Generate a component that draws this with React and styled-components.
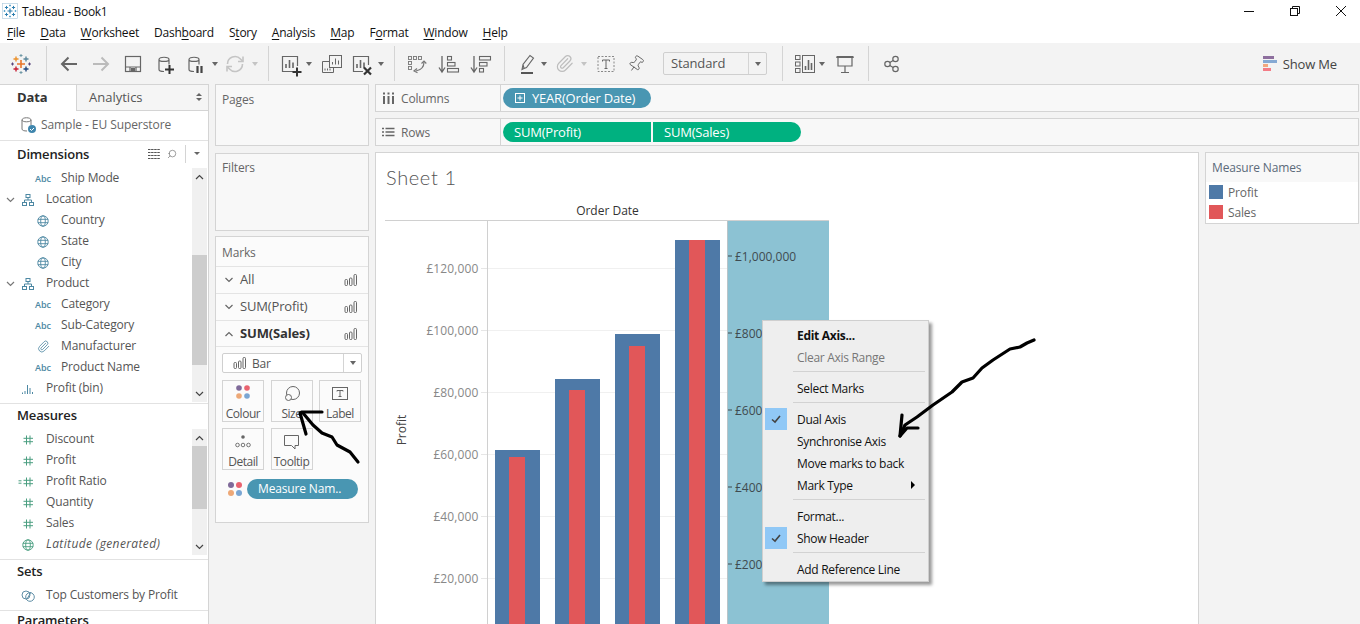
import React from 'react';
import styled, { createGlobalStyle } from 'styled-components';
import { Paperclip, Pin, Search } from 'lucide-react';

const UI = '"Open Sans", "Liberation Sans", sans-serif';
const GLOBAL_BORDER = '#d4d4d4';
const TEAL = '#4d88a3';
const GREEN = '#4a9e80';

const Global = createGlobalStyle`
  html, body { margin: 0; padding: 0; background: #f3f3f3; }
  * { box-sizing: border-box; }
`;

const Root = styled.div`
  position: relative; width: 1360px; height: 624px; overflow: hidden;
  background: #f3f3f3; font-family: ${UI}; font-size: 12px; color: #555;
  letter-spacing: -0.15px; display: flex; flex-direction: column;
`;
const TitleBar = styled.div`
  height: 22px; background: #fff; display: flex; align-items: center; padding-left: 2px; color: #111;
`;
const TitleText = styled.span` margin-left: 4px; font-size: 12px; letter-spacing: -0.3px; `;
const WinControls = styled.div` margin-left: auto; display: flex; margin-right: -4px; `;
const WinBtn = styled.div` width: 46px; height: 20px; display: flex; align-items: center; justify-content: center; `;
const MenuBar = styled.div`
  height: 21px; background: #fff; display: flex; align-items: center; padding-left: 7px; gap: 15px; color: #111; letter-spacing: -0.22px;
`;
const MenuEntry = styled.span` padding-bottom: 1px; u { text-underline-offset: 2px; } `;
const Toolbar = styled.div` height: 41px; display: flex; align-items: center; padding-left: 5px; flex-shrink: 0; `;
const Tool = styled.div`
  width: ${p => p.$w}px; height: 30px; flex-shrink: 0; display: flex; align-items: center; justify-content: center;
`;
const Caret = styled.span`
  display: block; width: 0; height: 0; border-left: 3px solid transparent; border-right: 3px solid transparent;
  border-top: 4px solid ${p => (p.$light ? '#c4c4c4' : '#666')};
`;
const ToolSep = styled.div`
  width: 1px; height: 35px; background: #d4d4d4; flex-shrink: 0;
  margin-left: ${p => p.$l}px; margin-right: ${p => p.$r}px;
`;
const Dropdown = styled.div`
  width: ${p => p.$w}px; height: ${p => p.$h}px; margin-left: ${p => p.$ml || 0}px; flex-shrink: 0;
  border: 1px solid #cfcfcf; border-radius: 2px; display: flex; align-items: center; color: #555;
  font-size: ${p => p.$fs || 12}px; background: ${p => p.$bg || 'transparent'};
`;
const DropLabel = styled.div` flex: 1; display: flex; align-items: center; padding: 0 0 ${p => p.$pb || 0}px ${p => p.$pad}px; gap: 5px; `;
const DropBtn = styled.div`
  width: ${p => p.$w}px; height: 100%; border-left: 1px solid #d4d4d4; display: flex; align-items: center; justify-content: center;
`;
const ShowMe = styled.div` margin-left: auto; margin-right: 23px; display: flex; align-items: center; gap: 6px; font-size: 13px; color: #444; `;

const Main = styled.div` flex: 1; display: flex; min-height: 0; `;
const DataPane = styled.div`
  width: 209px; flex-shrink: 0; background: #fff; border-right: 1px solid ${GLOBAL_BORDER}; border-top: 1px solid ${GLOBAL_BORDER};
  display: flex; flex-direction: column; overflow: hidden;
`;
const Tabs = styled.div` height: 26px; display: flex; flex-shrink: 0; `;
const DataTab = styled.div`
  width: 76px; padding: 0 0 2px 17px; display: flex; align-items: center; font-weight: 700; font-size: 13px; color: #333;
`;
const AnalyticsTab = styled.div`
  flex: 1; background: #f5f5f5; border-left: 1px solid ${GLOBAL_BORDER}; border-bottom: 1px solid ${GLOBAL_BORDER};
  display: flex; align-items: center; justify-content: space-between; padding: 0 6px 1px 12px; font-size: 13px; color: #555; letter-spacing: 0;
`;
const UpDown = styled.span`
  display: flex; flex-direction: column; gap: 2px;
`;
const Tri = styled.span`
  display: block; width: 0; height: 0; border-left: 3px solid transparent; border-right: 3px solid transparent;
  ${p => (p.$up ? 'border-bottom: 3px solid #666;' : 'border-top: 3px solid #666;')}
`;
const SourceRow = styled.div`
  height: 30px; flex-shrink: 0; border-bottom: 1px solid #e2e2e2; display: flex; align-items: center; padding: 0 0 2px 20px; gap: 4px; color: #666; letter-spacing: -0.08px;
`;
const SectionHead = styled.div`
  height: ${p => p.$h}px; flex-shrink: 0; display: flex; align-items: center; padding: 0 0 ${p => p.$pb || 0}px 17px;
  font-weight: 600; font-size: 13px; color: #222;
`;
const HeadTools = styled.div` margin-left: auto; display: flex; align-items: center; gap: 7px; padding-right: 8px; `;
const HeadSep = styled.div` width: 1px; height: 18px; background: #d4d4d4; margin: 0 1px; `;
const ListWrap = styled.div` display: flex; height: ${p => p.$h}px; flex-shrink: 0; `;
const List = styled.div` flex: 1; min-width: 0; `;
const Row = styled.div`
  height: 21px; flex-shrink: 0; display: flex; align-items: center; padding-left: ${p => (p.$nested ? 15 : 0)}px; white-space: nowrap;
  color: #555; margin-top: ${p => p.$mt || 0}px;
`;
const Chev = styled.span` width: 20px; flex-shrink: 0; display: flex; justify-content: center; `;
const RowIcon = styled.span` width: 16px; height: 16px; flex-shrink: 0; display: flex; align-items: center; justify-content: center; `;
const Abc = styled.span` font-size: 9px; font-weight: 600; color: ${TEAL}; letter-spacing: 0; `;
const RowName = styled.span`
  margin-left: 10px; padding-bottom: 2px;
  font-style: ${p => (p.$italic ? 'italic' : 'normal')};
  letter-spacing: ${p => (p.$italic ? '0.38px' : p.$wide ? '0' : '-0.15px')};
`;
const Scroll = styled.div`
  width: 15px; margin-right: 1px; flex-shrink: 0; background: #f0f0f0; display: flex; flex-direction: column; height: ${p => p.$h}px;
`;
const ScrollArrow = styled.div` height: 17px; flex-shrink: 0; display: flex; align-items: center; justify-content: center; margin-top: ${p => (p.$end ? 'auto' : 0)}; `;
const Thumb = styled.div` background: #cdcdcd; flex-shrink: 0; height: ${p => p.$h}px; margin-top: ${p => p.$t}px; `;
const Divider = styled.div` height: 1px; background: #e2e2e2; flex-shrink: 0; margin-top: ${p => p.$mt || 0}px; `;

const CardsCol = styled.div` width: 154px; flex-shrink: 0; margin: 0 6px; display: flex; flex-direction: column; `;
const Card = styled.div`
  height: ${p => p.$h}px; margin-bottom: ${p => p.$mb || 0}px; flex-shrink: 0; border: 1px solid ${GLOBAL_BORDER}; background: #f8f8f8; padding: ${p => p.$pt}px 6px 0; color: #666;
`;
const MarksCard = styled.div` height: 287px; border: 1px solid ${GLOBAL_BORDER}; background: #fbfbfb; flex-shrink: 0; `;
const MarksTitle = styled.div` height: 30px; padding: 7px 6px 0; color: #666; border-bottom: 1px solid #e4e4e4; `;
const MarkRow = styled.div`
  height: ${p => p.$h || 27}px; border-bottom: 1px solid #e4e4e4; display: flex; align-items: center; padding: 0 10px 0 8px; font-size: 13px;
  font-weight: ${p => (p.$bold ? 700 : 400)}; color: ${p => (p.$bold ? '#333' : '#555')};
`;
const MarkName = styled.span` margin-left: 6px; flex: 1; padding-bottom: 2px; `;
const MarksBody = styled.div` padding: 6px 6px 0; `;
const CellGrid = styled.div` display: grid; grid-template-columns: repeat(3, 42px); column-gap: 6.5px; row-gap: 6px; margin-top: 7px; `;
const Cell = styled.div`
  height: 42px; border: 1px solid ${GLOBAL_BORDER}; display: flex; flex-direction: column; align-items: center; justify-content: space-between; padding: 3px 0 0; color: #555; letter-spacing: -0.45px; line-height: 15px;
`;
const PillRow = styled.div` display: flex; align-items: center; margin-top: 9px; padding-left: 5px; gap: 4px; `;
const Pill = styled.div`
  height: 20px; width: ${p => p.$w}px; flex-shrink: 0; background: ${p => p.$bg}; color: #fff; display: flex; align-items: center;
  padding: 0 0 1px ${p => p.$pad}px; gap: 7px; white-space: nowrap; margin-right: ${p => p.$mr || 0}px;
  font-size: ${p => p.$fs || 13}px; letter-spacing: ${p => (p.$fs ? '-0.15px' : '-0.2px')};
  border-radius: ${p => p.$radius || '10px'};
`;

const RightCol = styled.div` flex: 1; min-width: 0; margin-right: 1px; display: flex; flex-direction: column; `;
const Shelf = styled.div`
  height: 28px; flex-shrink: 0; margin-bottom: 6px; border: 1px solid ${GLOBAL_BORDER}; background: #f8f8f8; display: flex;
`;
const ShelfLabel = styled.div`
  width: 125px; flex-shrink: 0; border-right: 1px solid ${GLOBAL_BORDER}; display: flex; align-items: center; padding-left: 6px; gap: 7px; color: #666;
`;
const ShelfPills = styled.div` display: flex; align-items: center; padding-left: 2px; `;
const Stage = styled.div` flex: 1; min-height: 0; display: flex; gap: 6px; `;
const Sheet = styled.div`
  width: 824px; flex-shrink: 0; background: #fff; border: 1px solid ${GLOBAL_BORDER}; border-bottom: 0; padding-left: 9px; overflow: hidden;
`;
const SheetTitle = styled.div`
  height: 50px; display: flex; align-items: center; padding: 0 0 2px 1px; font-family: Lato, sans-serif; font-weight: 300; font-size: 20px; color: #555; letter-spacing: .65px;
`;
const HeaderRow = styled.div`
  width: 444px; height: 18px; padding-left: 103px; border-bottom: 1px solid #d0d0d0;
`;
const HeaderText = styled.div` width: 239px; text-align: center; font-size: 12px; font-weight: 400; color: #333; line-height: 16px; letter-spacing: 0; `;
const Chart = styled.div` display: flex; height: 403px; `;
const AxisLeft = styled.div` width: 102px; flex-shrink: 0; position: relative; `;
const AxisTitle = styled.div`
  position: absolute; left: 16px; top: 208.500px; transform: translate(-50%, -50%) rotate(-90deg); font-size: 12px; font-weight: 500; color: #444; letter-spacing: 0;
`;
const AxisTick = styled.div`
  position: absolute; right: 8.500px; top: ${p => p.$y}px; transform: translateY(-50%); color: #888; letter-spacing: 0.12px;
`;
const AxisMark = styled.div`
  position: absolute; right: 0; top: ${p => p.$y}px; width: 6px; height: 1px; background: #e6e6e6;
`;
const Plot = styled.div`
  width: 240px; flex-shrink: 0; border-left: 1px solid #d0d0d0; position: relative; display: flex; align-items: flex-end; gap: 15px; padding-left: 7px;
`;
const GridLine = styled.div` position: absolute; left: 0; right: 0; top: ${p => p.$y}px; height: 1px; background: #f0f0f0; `;
const Bar = styled.div`
  position: relative; width: 45px; flex-shrink: 0; background: #4e79a7; display: flex; justify-content: center; align-items: flex-end;
`;
const RedBar = styled.div` width: 16px; margin-right: 1px; background: #e15759; `;
const AxisRight = styled.div`
  width: 102px; flex-shrink: 0; background: #8cc2d3; border-left: 1px solid #b9c4c8; position: relative;
`;
const RTick = styled.div`
  position: absolute; left: 0; top: ${p => p.$y}px; display: flex; align-items: center; gap: 3px; transform: translateY(-50%); color: #3f4b50; letter-spacing: 0;
`;
const RMark = styled.span` width: 4px; height: 1px; background: #3f4b50; `;
const Legend = styled.div`
  width: 154px; height: 72px; flex-shrink: 0; border: 1px solid ${GLOBAL_BORDER}; background: #fff;
`;
const LegendHead = styled.div` height: 29px; background: #f8f8f8; display: flex; align-items: center; padding: 0 0 1px 6px; color: #5b6a7a; `;
const LegendRow = styled.div` height: 20px; display: flex; align-items: center; padding-left: 3px; gap: 5px; color: #666; `;
const Swatch = styled.span` width: 14px; height: 14px; background: ${p => p.$c}; `;

const CtxMenu = styled.div`
  position: absolute; left: 762px; top: 320px; width: 167px; height: 262px; padding: 3px 0 0; background: #eeeeee; border: 1px solid #cfcfcf;
  box-shadow: 3px 3px 3px rgba(0,0,0,.4); color: #111; z-index: 5; letter-spacing: -0.3px;
`;
const CtxItem = styled.div`
  height: 22px; display: flex; align-items: center; padding-left: ${p => (p.$checked ? 2 : 34)}px;
  font-weight: ${p => (p.$bold ? 700 : 400)}; color: ${p => (p.$off ? '#777' : '#111')};
`;
const CheckBox = styled.span`
  width: 22px; height: 22px; margin-right: 10px; background: #90c8f6; display: flex; align-items: center; justify-content: center;
`;
const SubArrow = styled.span`
  margin-left: auto; margin-right: 13px; width: 0; height: 0; border-top: 4px solid transparent; border-bottom: 4px solid transparent; border-left: 4px solid #000;
`;
const CtxSep = styled.div`
  height: 9px; padding-top: 3px; margin: 0 3px 0 30px;
  &::before { content: ''; display: block; height: 1px; background: #d2d2d2; }
`;
const Sketch = styled.svg` position: absolute; left: 0; top: 0; z-index: 6; pointer-events: none; `;

const S = styled.svg` display: block; flex-shrink: 0; overflow: visible; `;
const Ic = ({ s = 24, c = '#666', w = 1.2, children }) => (
  <S width={s} height={s} viewBox={`0 0 ${s} ${s}`} fill="none" stroke={c} strokeWidth={w}>{children}</S>
);

const Plus = ({ x, y, r, c, w = 1.4 }) => (
  <path d={`M${x - r} ${y}H${x + r}M${x} ${y - r}V${y + r}`} stroke={c} strokeWidth={w} />
);
const Logo = () => (
  <Ic s={24}>
    <Plus x={12} y={12} r={4} c="#e8762c" w={1.6} />
    <Plus x={7} y={7} r={2.5} c="#eb912b" /><Plus x={17} y={7} r={2.5} c="#5b879b" />
    <Plus x={7} y={17} r={2.5} c="#c72035" /><Plus x={17} y={17} r={2.5} c="#1f457e" />
    <Plus x={12} y={3.5} r={1.5} c="#7099a6" w={1} /><Plus x={12} y={20.5} r={1.5} c="#7099a6" w={1} />
    <Plus x={3.5} y={12} r={1.5} c="#59457c" w={1} /><Plus x={20.5} y={12} r={1.5} c="#59457c" w={1} />
  </Ic>
);
const TitleIcon = () => (
  <Ic s={16}>
    <rect x=".5" y=".5" width="15" height="15" stroke="#a9c9dc" strokeWidth=".6" />
    <Plus x={8} y={8} r={2.5} c="#2d7fb0" w={1.2} />
    <Plus x={4.5} y={4.5} r={1.6} c="#2d7fb0" w={1} /><Plus x={11.5} y={4.5} r={1.6} c="#2d7fb0" w={1} />
    <Plus x={4.5} y={11.5} r={1.6} c="#2d7fb0" w={1} /><Plus x={11.5} y={11.5} r={1.6} c="#2d7fb0" w={1} />
    <Plus x={8} y={2.5} r={1} c="#4d9cc8" w={.8} /><Plus x={8} y={13.5} r={1} c="#4d9cc8" w={.8} />
    <Plus x={2.5} y={8} r={1} c="#4d9cc8" w={.8} /><Plus x={13.5} y={8} r={1} c="#4d9cc8" w={.8} />
  </Ic>
);
const ArrowH = ({ dir, c }) => (
  <Ic c={c} w={2}>
    {dir === 'l'
      ? <path d="M20 12H5M11.5 5.5L5 12l6.5 6.5" />
      : <path d="M4 12h15M12.5 5.5L19 12l-6.5 6.5" />}
  </Ic>
);
const SaveIc = () => (
  <Ic>
    <rect x="4.5" y="4.5" width="15" height="15" />
    <path d="M4.5 15h15M9 15v4.5h6V15" />
    <rect x="10" y="16" width="4" height="3.5" fill="#666" stroke="none" />
  </Ic>
);
const Cyl = () => (
  <>
    <path d="M6 7.5c0-3 10-3 10 0v5M6 7.5c0 2.6 10 2.6 10 0M6 7.5v10c0 1.4 2.5 2 5 2" />
  </>
);
const DsAdd = () => (
  <Ic><Cyl /><path d="M12 17.5h9M16.500 13v9" stroke="#333" strokeWidth="2" /></Ic>
);
const DsPause = () => (
  <Ic><Cyl /><path d="M14.500 14v7M18.500 14v7" stroke="#444" strokeWidth="2.200" /></Ic>
);
const RefreshIc = () => (
  <Ic c="#c4c4c4" w={1.6}>
    <path d="M4.500 12a7.500 7.500 0 0 1 13-5l2 2M19.500 12a7.500 7.500 0 0 1-13 5l-2-2" />
    <path d="M20 4.500V9.500h-5M4 19.500V14.500h5" />
  </Ic>
);
const Bars = ({ x, y, c = '#666' }) => (
  <path d={`M${x} ${y}v-4M${x + 3.5} ${y}v-8M${x + 7} ${y}v-5.500`} stroke={c} strokeWidth="1.600" />
);
const NewSheet = () => (
  <Ic>
    <path d="M15 19.500H4.500v-15h15V14" /><Bars x={8} y={16} />
    <path d="M14.500 20h9M19 15.500v9" stroke="#333" strokeWidth="2" />
  </Ic>
);
const DupSheet = () => (
  <Ic w={1}>
    <rect x="10.500" y="3.500" width="12" height="12" fill="#f3f3f3" />
    <path d="M13.500 12.500v-2.500M16.500 12.500v-6M19.500 12.500v-4" />
    <path d="M10 9.500H3.500V20.500H14.500V15.500" />
    <path d="M6 18.500v-2M8.500 18.500v-2M11 18.500v-2" />
  </Ic>
);
const ClearSheet = () => (
  <Ic>
    <path d="M14 19.500H4.500v-15h15V13" /><Bars x={8} y={16} />
    <path d="M15 15.500l7 7M22 15.500l-7 7" stroke="#333" strokeWidth="2.200" />
  </Ic>
);
const SwapIc = () => (
  <Ic w={.9} c="#777">
    <rect x="4.500" y="4.500" width="3" height="3" /><rect x="9.500" y="4.500" width="3" height="3" /><rect x="14.500" y="4.500" width="3" height="3" />
    <rect x="4.500" y="9.500" width="3" height="3" /><rect x="4.500" y="14.500" width="3" height="3" />
    <path d="M20 10c0 5-3 8-8 9" strokeWidth="1.200" /><path d="M17.500 11.500l2.500-2.500 2.300 2.500M13 16.500l-3 2.500 3.500 1.800" strokeWidth="1.200" />
  </Ic>
);
const SortIc = ({ desc }) => (
  <Ic w={1.1}>
    <path d="M5 4v15M2 15.500l3 4.500 3-4.500" strokeWidth="1.300" />
    {desc
      ? <><rect x="10.500" y="4.500" width="11" height="3.500" /><rect x="10.500" y="10.500" width="7.500" height="3.500" /><rect x="10.500" y="16.500" width="4" height="3.500" /></>
      : <><rect x="10.500" y="4.500" width="4" height="3.500" /><rect x="10.500" y="10.500" width="7.500" height="3.500" /><rect x="10.500" y="16.500" width="11" height="3.500" /></>}
  </Ic>
);
const Highlighter = () => (
  <Ic w={1.100}>
    <path d="M9 16.500l-1-4L15 3.500l3.500 2.500-7 9.500zM8 12.500L7 17.500l2-1" />
    <path d="M6 21h12" stroke="#555" strokeWidth="2" />
  </Ic>
);
const TBox = () => (
  <Ic c="#888" w={1}>
    <rect x="4" y="4.500" width="16" height="15" strokeDasharray="2 1.500" />
    <path d="M8.500 9.500v-1.500h7v1.500M12 8v8.500M10.500 16.500h3" stroke="#666" />
  </Ic>
);
const ShowMeSheets = () => (
  <Ic w={1}>
    <rect x="2.500" y="3.500" width="4.500" height="4" /><rect x="2.500" y="10" width="4.500" height="4" /><rect x="2.500" y="16.500" width="4.500" height="4" />
    <rect x="9.500" y="3.500" width="12" height="17" />
    <path d="M12.500 18v-4M15.500 18v-10M18.500 18v-7" strokeWidth="1.600" />
  </Ic>
);
const Present = () => (
  <Ic w={1.200}>
    <path d="M3.500 5.500h17M5 5.500v8.500h14V5.500M12 14v6M8 20.500h8" />
    <path d="M3.500 5h17" strokeWidth="2" />
  </Ic>
);
const ShareIc = () => (
  <Ic w={1.200}>
    <circle cx="7.500" cy="12" r="2.700" /><circle cx="15.500" cy="7" r="2.700" /><circle cx="15.500" cy="17" r="2.700" />
    <path d="M9.800 10.500l3.400-2M9.800 13.500l3.400 2" />
  </Ic>
);
const ShowMeIc = () => (
  <S width="14" height="16" viewBox="0 0 14 16">
    <rect x="0" y="0" width="11" height="3" fill="#8e6f9e" />
    <rect x="0" y="4" width="14" height="3" fill="#86a9d3" />
    <rect x="0" y="8" width="5" height="3" fill="#f2a77e" />
    <rect x="0" y="12" width="8" height="3" fill="#f47c86" />
  </S>
);
const SourceIc = () => (
  <S width="17" height="18" viewBox="0 0 17 18" fill="none" stroke="#777" strokeWidth="1">
    <path d="M2 4c0-3 9-3 9 0v5M2 4c0 2.400 9 2.400 9 0M2 4v9c0 1.400 2 2 5 2" />
    <circle cx="12" cy="13" r="4" fill="#3f86ad" stroke="none" />
    <path d="M10 13l1.500 1.500 2.500-2.500" stroke="#fff" />
  </S>
);
const GridIc = () => (
  <Ic s={12} w={1} c="#555">
    <path d="M0 1.500h12M0 4.500h12M0 7.500h12M0 10.500h12" strokeDasharray="2.500 .6" />
  </Ic>
);
const ChevIc = ({ up, c = '#666', w = 9 }) => (
  <S width={w} height="6" viewBox="0 0 9 6" fill="none" stroke={c} strokeWidth="1.200">
    <path d={up ? 'M1 5l3.500-3.500L8 5' : 'M1 1l3.500 3.500L8 1'} />
  </S>
);
const Globe = ({ c = TEAL }) => (
  <Ic s={12} c={c} w={.9}>
    <circle cx="6" cy="6" r="5.200" /><ellipse cx="6" cy="6" rx="2.300" ry="5.200" />
    <path d="M.8 4.300h10.400M.8 7.700h10.400" />
  </Ic>
);
const Hier = () => (
  <Ic s={12} c={TEAL} w={1}>
    <rect x="4" y=".5" width="4" height="3" /><rect x=".5" y="8.500" width="4" height="3" /><rect x="7.500" y="8.500" width="4" height="3" />
    <path d="M6 3.500V6M2.500 8.500V6h7v2.500" />
  </Ic>
);
const Hash = ({ ratio }) => (
  <S width="16" height="12" viewBox="0 0 16 12" fill="none" stroke={GREEN} strokeWidth="1">
    <path d="M6.500 1.500V10.500M10 1.500V10.500M3.500 4.300h9.500M3.500 7.700h9.500" />
    {ratio && <path d="M-1.500 4.800h3M-1.500 7.200h3" />}
  </S>
);
const BinIc = () => (
  <Ic s={14} c={TEAL} w={1}>
    <path d="M1.500 12v-1.500M4 12v-3M6.500 12V3M9 12V6M11.500 12v-2" />
  </Ic>
);
const SetIc = () => (
  <Ic s={14} c="#5f8ea6" w={1}>
    <circle cx="5" cy="6" r="4" /><circle cx="9" cy="8" r="4.300" />
    <path d="M6 10l4-7" />
  </Ic>
);
const ClipIc = ({ c = TEAL, s = 13 }) => <Paperclip size={s} color={c} strokeWidth={1.5} />;
const BarMark = ({ c = '#666' }) => (
  <Ic s={14} c={c} w={1}>
    <rect x="1" y="6.500" width="2.500" height="6" rx="1" /><rect x="5.500" y="5" width="2.500" height="7.500" rx="1" /><rect x="10" y="1.500" width="2.500" height="11" rx="1" />
  </Ic>
);
const DotGrid = ({ s = 16, r = 2.800 }) => (
  <S width={s} height={s} viewBox="0 0 16 16">
    <circle cx="4" cy="4" r={r} fill="#7f6a99" /><circle cx="12" cy="4" r={r} fill="#e9636f" />
    <circle cx="4" cy="12" r={r} fill="#eda877" /><circle cx="12" cy="12" r={r} fill="#7aa6d3" />
  </S>
);
const SizeIc = () => (
  <Ic s={20} w={1} c="#666">
    <circle cx="11" cy="9" r="6.500" /><circle cx="6.500" cy="13.500" r="3" fill="#fbfbfb" />
  </Ic>
);
const LabelIc = () => (
  <Ic s={20} w={1} c="#666">
    <rect x="2.500" y="3.500" width="15" height="12" />
    <path d="M7 7.500v-1h6v1M10 6.500v6M8.500 12.500h3" />
  </Ic>
);
const DetailIc = () => (
  <Ic s={20} w={.9} c="#666">
    <circle cx="10" cy="5" r="1.800" fill="#666" stroke="none" />
    <circle cx="4.500" cy="13" r="1.800" /><circle cx="10" cy="13" r="1.800" /><circle cx="15.500" cy="13" r="1.800" />
  </Ic>
);
const TooltipIc = () => (
  <Ic s={20} w={1} c="#666">
    <path d="M2.500 3.500h14v10h-3.500v3.500l-3.500-3.500h-7z" />
  </Ic>
);

const dims = [
  { n: 'Ship Mode', i: 'abc', nested: true },
  { n: 'Location', i: 'hier', chev: true },
  { n: 'Country', i: 'globe', nested: true },
  { n: 'State', i: 'globe', nested: true },
  { n: 'City', i: 'globe', nested: true },
  { n: 'Product', i: 'hier', chev: true },
  { n: 'Category', i: 'abc', nested: true },
  { n: 'Sub-Category', i: 'abc', nested: true },
  { n: 'Manufacturer', i: 'clip', nested: true },
  { n: 'Product Name', i: 'abc', nested: true },
  { n: 'Profit (bin)', i: 'bin' },
];
const measures = [
  { n: 'Discount', i: 'hash' }, { n: 'Profit', i: 'hash' }, { n: 'Profit Ratio', i: 'ratio' },
  { n: 'Quantity', i: 'hash' }, { n: 'Sales', i: 'hash' }, { n: 'Latitude (generated)', i: 'ggreen', italic: true },
];
const rowIcon = i => ({
  abc: <Abc>Abc</Abc>, hier: <Hier />, globe: <Globe />, clip: <ClipIc />, bin: <BinIc />,
  hash: <Hash />, ratio: <Hash ratio />, ggreen: <Globe c={GREEN} />,
}[i]);

const TreeRow = ({ r }) => (
  <Row $nested={r.nested}>
    <Chev>{r.chev && <ChevIc c="#777" />}</Chev>
    <RowIcon>{rowIcon(r.i)}</RowIcon>
    <RowName $italic={r.italic}>{r.n}</RowName>
  </Row>
);
const ScrollBar = ({ h, t, th }) => (
  <Scroll $h={h}>
    <ScrollArrow><ChevIc up c="#444" /></ScrollArrow>
    <Thumb $t={t} $h={th} />
    <ScrollArrow $end><ChevIc c="#444" /></ScrollArrow>
  </Scroll>
);

const menuItems = ['File', 'Data', 'Worksheet', 'Dashboard', 'Story', 'Analysis', 'Map', 'Format', 'Window', 'Help'];
const accel = { File: 0, Data: 0, Worksheet: 0, Dashboard: 4, Story: 1, Analysis: 0, Map: 0, Format: 1, Window: 0, Help: 0 };
const leftTicks = [['£120,000', 47], ['£100,000', 109], ['£80,000', 171], ['£60,000', 233], ['£40,000', 295], ['£20,000', 357]];
const rightTicks = [['£1,000,000', 35], ['£800,000', 112], ['£600,000', 189], ['£400,000', 266], ['£200,000', 343]];
const bars = [[174, 167], [245, 234], [290, 278], [384, 384]];

export default function App() {
  return (
    <Root>
      <Global />
      <TitleBar>
        <TitleIcon />
        <TitleText>Tableau - Book1</TitleText>
        <WinControls>
          <WinBtn><Ic s={12} c="#111" w={1}><path d="M1 6.500h10" /></Ic></WinBtn>
          <WinBtn><Ic s={12} c="#111" w={1}><rect x="1.500" y="3.500" width="7" height="7" /><path d="M3.500 3.500v-2h7v7h-2" /></Ic></WinBtn>
          <WinBtn><Ic s={12} c="#111" w={1}><path d="M1 1l10 10M11 1L1 11" /></Ic></WinBtn>
        </WinControls>
      </TitleBar>
      <MenuBar>
        {menuItems.map(m => {
          const k = accel[m];
          return <MenuEntry key={m}>{m.slice(0, k)}<u>{m[k]}</u>{m.slice(k + 1)}</MenuEntry>;
        })}
      </MenuBar>
      <Toolbar>
        <Tool $w={32}><Logo /></Tool>
        <ToolSep $l={9} $r={8} />
        <Tool $w={28}><ArrowH dir="l" c="#666" /></Tool>
        <Tool $w={36}><ArrowH dir="r" c="#bbb" /></Tool>
        <Tool $w={28}><SaveIc /></Tool>
        <Tool $w={36}><DsAdd /></Tool>
        <Tool $w={24}><DsPause /></Tool>
        <Tool $w={16}><Caret /></Tool>
        <Tool $w={24}><RefreshIc /></Tool>
        <Tool $w={16}><Caret $light /></Tool>
        <ToolSep $l={5} $r={9} />
        <Tool $w={24}><NewSheet /></Tool>
        <Tool $w={14}><Caret /></Tool>
        <Tool $w={30}><DupSheet /></Tool>
        <Tool $w={30}><ClearSheet /></Tool>
        <Tool $w={10}><Caret /></Tool>
        <ToolSep $l={8} $r={7} />
        <Tool $w={28}><SwapIc /></Tool>
        <Tool $w={38}><SortIc /></Tool>
        <Tool $w={26}><SortIc desc /></Tool>
        <ToolSep $l={10} $r={9} />
        <Tool $w={26}><Highlighter /></Tool>
        <Tool $w={8}><Caret /></Tool>
        <Tool $w={32}><ClipIc c="#bdbdbd" s={19} /></Tool>
        <Tool $w={8}><Caret $light /></Tool>
        <Tool $w={36}><TBox /></Tool>
        <Tool $w={24}><Pin size={18} color="#666" strokeWidth={1.2} style={{ transform: 'rotate(35deg)' }} /></Tool>
        <Dropdown $w={104} $h={23} $ml={15} $fs={13}>
          <DropLabel $pad={7} $pb={1}>Standard</DropLabel>
          <DropBtn $w={18}><Caret /></DropBtn>
        </Dropdown>
        <ToolSep $l={15} $r={12} />
        <Tool $w={20}><ShowMeSheets /></Tool>
        <Tool $w={14}><Caret /></Tool>
        <Tool $w={32}><Present /></Tool>
        <ToolSep $l={7} $r={7} />
        <Tool $w={32}><ShareIc /></Tool>
        <ShowMe><ShowMeIc />Show Me</ShowMe>
      </Toolbar>
      <Main>
        <DataPane>
          <Tabs>
            <DataTab>Data</DataTab>
            <AnalyticsTab>Analytics<UpDown><Tri $up /><Tri /></UpDown></AnalyticsTab>
          </Tabs>
          <SourceRow><SourceIc />Sample - EU Superstore</SourceRow>
          <SectionHead $h={27} $pb={2}>
            Dimensions
            <HeadTools>
              <GridIc />
              <Search size={10} color="#666" strokeWidth={1.5} style={{ transform: 'scaleX(-1)' }} />
              <HeadSep />
              <Tri />
            </HeadTools>
          </SectionHead>
          <ListWrap $h={235}>
            <List>{dims.map(r => <TreeRow key={r.n} r={r} />)}</List>
            <ScrollBar h={234} t={70} th={110} />
          </ListWrap>
          <Divider />
          <SectionHead $h={25} $pb={3}>Measures</SectionHead>
          <ListWrap $h={126}>
            <List>{measures.map(r => <TreeRow key={r.n} r={r} />)}</List>
            <ScrollBar h={126} t={0} th={63} />
          </ListWrap>
          <Divider $mt={4} />
          <SectionHead $h={24} $pb={3}>Sets</SectionHead>
          <Row $mt={1}><Chev /><RowIcon><SetIc /></RowIcon><RowName>Top Customers by Profit</RowName></Row>
          <Divider $mt={4} />
          <SectionHead $h={24} $pb={6}>Parameters</SectionHead>
        </DataPane>
        <CardsCol>
          <Card $h={62} $mb={7} $pt={6}>Pages</Card>
          <Card $h={78} $mb={5} $pt={5}>Filters</Card>
          <MarksCard>
            <MarksTitle>Marks</MarksTitle>
            <MarkRow><ChevIc c="#666" w={10} /><MarkName>All</MarkName><BarMark /></MarkRow>
            <MarkRow><ChevIc c="#666" w={10} /><MarkName>SUM(Profit)</MarkName><BarMark /></MarkRow>
            <MarkRow $bold $h={26}><ChevIc up c="#666" w={10} /><MarkName>SUM(Sales)</MarkName><BarMark /></MarkRow>
            <MarksBody>
              <Dropdown $w={140} $h={20} $bg="#fff">
                <DropLabel $pad={10}><BarMark />Bar</DropLabel>
                <DropBtn $w={18}><Caret /></DropBtn>
              </Dropdown>
              <CellGrid>
                <Cell><DotGrid />Colour</Cell>
                <Cell><SizeIc />Size</Cell>
                <Cell><LabelIc />Label</Cell>
                <Cell><DetailIc />Detail</Cell>
                <Cell><TooltipIc />Tooltip</Cell>
              </CellGrid>
              <PillRow>
                <DotGrid s={16} r={3} />
                <Pill $w={111} $bg="#4996b2" $pad={11} $fs={12}>Measure Nam..</Pill>
              </PillRow>
            </MarksBody>
          </MarksCard>
        </CardsCol>
        <RightCol>
          <Shelf>
            <ShelfLabel>
              <Ic s={12} w={2} c="#666"><path d="M2 4v8M6.500 4v8M11 4v8M2 0.500v2M6.500 0.500v2M11 0.500v2" /></Ic>
              Columns
            </ShelfLabel>
            <ShelfPills>
              <Pill $w={148} $bg="#4996b2" $pad={12}>
                <Ic s={10} c="#fff" w={1}><rect x=".5" y=".5" width="9" height="9" /><path d="M2.500 5h5M5 2.500v5" /></Ic>
                YEAR(Order Date)
              </Pill>
            </ShelfPills>
          </Shelf>
          <Shelf>
            <ShelfLabel>
              <Ic s={12} w={1.500} c="#666"><path d="M3.500 2.500h9M3.500 6h9M3.500 9.500h9M0 2.500h2M0 6h2M0 9.500h2" /></Ic>
              Rows
            </ShelfLabel>
            <ShelfPills>
              <Pill $w={148} $mr={2} $bg="#00b180" $pad={11} $radius="10px 0 0 10px">SUM(Profit)</Pill>
              <Pill $w={148} $bg="#00b180" $pad={11} $radius="0 10px 10px 0">SUM(Sales)</Pill>
            </ShelfPills>
          </Shelf>
          <Stage>
            <Sheet>
              <SheetTitle>Sheet 1</SheetTitle>
              <HeaderRow><HeaderText>Order Date</HeaderText></HeaderRow>
              <Chart>
                <AxisLeft>
                  <AxisTitle>Profit</AxisTitle>
                  {leftTicks.map(([t, y]) => (
                    <React.Fragment key={t}>
                      <AxisTick $y={y}>{t}</AxisTick>
                      <AxisMark $y={y} />
                    </React.Fragment>
                  ))}
                </AxisLeft>
                <Plot>
                  {leftTicks.map(([t, y]) => <GridLine key={t} $y={y} />)}
                  {bars.map(([b, r]) => (
                    <Bar key={b} style={{ height: b }}><RedBar style={{ height: r }} /></Bar>
                  ))}
                </Plot>
                <AxisRight>
                  {rightTicks.map(([t, y]) => <RTick key={t} $y={y}><RMark />{t}</RTick>)}
                </AxisRight>
              </Chart>
            </Sheet>
            <Legend>
              <LegendHead>Measure Names</LegendHead>
              <LegendRow><Swatch $c="#4e79a7" />Profit</LegendRow>
              <LegendRow><Swatch $c="#e15759" />Sales</LegendRow>
            </Legend>
          </Stage>
        </RightCol>
      </Main>
      <CtxMenu>
        <CtxItem $bold>Edit Axis...</CtxItem>
        <CtxItem $off>Clear Axis Range</CtxItem>
        <CtxSep />
        <CtxItem>Select Marks</CtxItem>
        <CtxSep />
        <CtxItem $checked><CheckBox><Ic s={12} c="#444" w={1.600}><path d="M2 6.500l3 2.500 5-6" /></Ic></CheckBox>Dual Axis</CtxItem>
        <CtxItem>Synchronise Axis</CtxItem>
        <CtxItem>Move marks to back</CtxItem>
        <CtxItem>Mark Type<SubArrow /></CtxItem>
        <CtxSep />
        <CtxItem>Format...</CtxItem>
        <CtxItem $checked><CheckBox><Ic s={12} c="#444" w={1.600}><path d="M2 6.500l3 2.500 5-6" /></Ic></CheckBox>Show Header</CtxItem>
        <CtxSep />
        <CtxItem>Add Reference Line</CtxItem>
      </CtxMenu>
      <Sketch width="1360" height="624" viewBox="0 0 1360 624" fill="none" stroke="#000" strokeWidth="3.200" strokeLinecap="round" strokeLinejoin="round">
        <path d="M1034 340L1027 343L1020 347L1010 349L993 360L982 368L973 378L962 382L952 392L933 405L917 417L905 425L900 436" />
        <path d="M902 415L900 436L907 428L918 428" />
        <path d="M322 412L302 412L300 413L306 434" />
        <path d="M303 413L313 425L322 433L332 437L337 445L350 452L358 462" />
      </Sketch>
    </Root>
  );
}
